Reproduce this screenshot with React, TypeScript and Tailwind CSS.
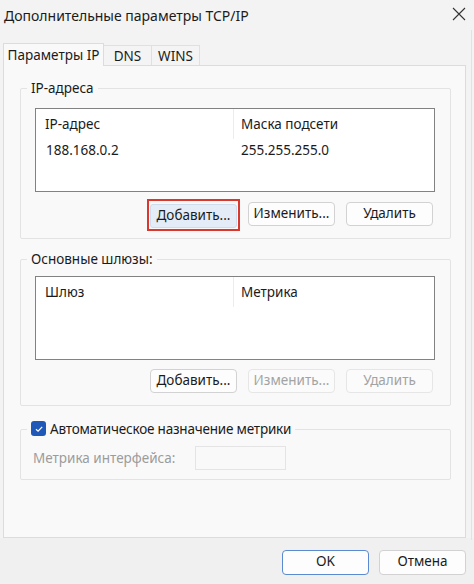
import clsx from "clsx";
import type { ReactNode } from "react";

function Btn({
  children,
  disabled,
  primary,
  className,
}: {
  children: ReactNode;
  disabled?: boolean;
  primary?: boolean;
  className?: string;
}) {
  return (
    <button
      className={clsx(
        "h-[24px] w-[87px] rounded-[4px] border text-[13.5px] leading-none",
        disabled
          ? "border-[#e6e6e6] bg-[#fbfbfb] text-[#a3a3a3]"
          : primary
            ? "border-[#5a8ad0] bg-[#fdfdfd] text-[#1b1b1b]"
            : "border-[#d2d2d2] bg-[#fdfdfd] text-[#1b1b1b]",
        className,
      )}
    >
      {children}
    </button>
  );
}

function Group({
  label,
  children,
  className,
}: {
  label: ReactNode;
  children: ReactNode;
  className?: string;
}) {
  return (
    <div
      className={clsx(
        "relative ml-[16px] w-[431px] rounded-[2px] border border-[#e3e3e3]",
        className,
      )}
    >
      <div className="absolute -top-[11px] left-[6px] bg-[#f9f9f9] px-[4px] text-[13.5px] leading-[20px] text-[#1b1b1b]">
        {label}
      </div>
      {children}
    </div>
  );
}

function ListBox({ col1, col2, rows }: { col1: string; col2: string; rows: string[][] }) {
  return (
    <div className="ml-[14px] h-[84px] w-[400px] border border-[#828282] bg-white text-[13.5px] text-[#1b1b1b]">
      <div className="flex h-[30px] items-center">
        <div className="flex h-full w-[198px] items-center border-r border-[#ececec] pl-[9px]">
          {col1}
        </div>
        <div className="pl-[7px]">{col2}</div>
      </div>
      {rows.map((r) => (
        <div key={r[0]} className="flex h-[22px] items-center">
          <div className="w-[198px] pl-[10px]">{r[0]}</div>
          <div className="pl-[7px]">{r[1]}</div>
        </div>
      ))}
    </div>
  );
}

export default function App() {
  return (
    <div className="relative h-[584px] w-[474px] overflow-hidden bg-[#f3f3f3] font-['Noto_Sans',sans-serif] text-[#1b1b1b]">
      <div className="absolute right-[2px] top-[30px] h-[510px] w-px bg-[#e2e2e2]" />

      {/* title bar */}
      <div className="flex h-[30px] items-center justify-between pl-[4px] pr-[8px]">
        <span className="text-[14px]">Дополнительные параметры TCP/IP</span>
        <svg width="14" height="14" viewBox="0 0 14 14" className="mt-[-2px]">
          <path d="M1 1 L13 13 M13 1 L1 13" stroke="#333" strokeWidth="1.1" fill="none" />
        </svg>
      </div>

      {/* tabs */}
      <div className="mt-[13px] flex items-end pl-[3px] text-[13.5px]">
        <div className="relative z-10 -mb-px flex h-[23px] w-[101px] items-center justify-center border border-b-0 border-[#dcdcdc] bg-[#f9f9f9]">
          Параметры IP
        </div>
        <div className="flex h-[20px] w-[48px] items-center justify-center border-t border-r border-[#e0e0e0] bg-[#f4f4f4] pt-[2px]">
          DNS
        </div>
        <div className="flex h-[20px] w-[48px] items-center justify-center border-t border-r border-[#e0e0e0] bg-[#f4f4f4] pt-[2px]">
          WINS
        </div>
      </div>

      {/* panel */}
      <div className="ml-[3px] h-[473px] w-[463px] border border-[#dcdcdc] bg-[#f9f9f9] pt-[22px]">
        <Group label="IP-адреса" className="pb-[10px] pt-[19px]">
          <ListBox col1="IP-адрес" col2="Маска подсети" rows={[["188.168.0.2", "255.255.255.0"]]} />
          <div className="mt-[10px] flex justify-end gap-[11px] pr-[17px]">
            <div className="relative">
              <div className="pointer-events-none absolute -inset-[3px] border-2 border-[#d8382e]" />
              <button className="h-[24px] w-[87px] rounded-[3px] border border-[#cfdceb] bg-[#e4edf7] text-[13.5px] leading-none text-[#1b1b1b]">
                Добавить...
              </button>
            </div>
            <Btn>Изменить...</Btn>
            <Btn>Удалить</Btn>
          </div>
        </Group>

        <Group label="Основные шлюзы:" className="mt-[20px] pb-[12px] pt-[16px]">
          <ListBox col1="Шлюз" col2="Метрика" rows={[]} />
          <div className="mt-[9px] flex justify-end gap-[11px] pr-[17px]">
            <Btn>Добавить...</Btn>
            <Btn disabled>Изменить...</Btn>
            <Btn disabled>Удалить</Btn>
          </div>
        </Group>

        <Group
          className="mt-[23px] h-[51px] pt-[16px]"
          label={
            <span className="flex items-center gap-[4px]">
              <span className="flex h-[15px] w-[15px] items-center justify-center rounded-[3px] bg-[#2058b8]">
                <svg width="10" height="10" viewBox="0 0 10 10">
                  <path d="M2 5.2 L4.1 7.2 L8.2 2.8" stroke="#fff" strokeWidth="1.2" fill="none" />
                </svg>
              </span>
              <span className="tracking-[-0.2px]">Автоматическое назначение метрики</span>
            </span>
          }
        >
          <div className="flex items-center pl-[12px]">
            <span className="w-[162px] text-[13.5px] text-[#9c9c9c]">Метрика интерфейса:</span>
            <div className="h-[24px] w-[91px] border border-[#e4e4e4] bg-[#f9f9f9]" />
          </div>
        </Group>
      </div>

      {/* footer */}
      <div className="flex h-[46px] items-center justify-end gap-[10px] bg-[#f0f0f0] pr-[8px] pt-[2px]">
        <Btn primary className="h-[25px]">
          OK
        </Btn>
        <Btn className="h-[25px]">Отмена</Btn>
      </div>
    </div>
  );
}
